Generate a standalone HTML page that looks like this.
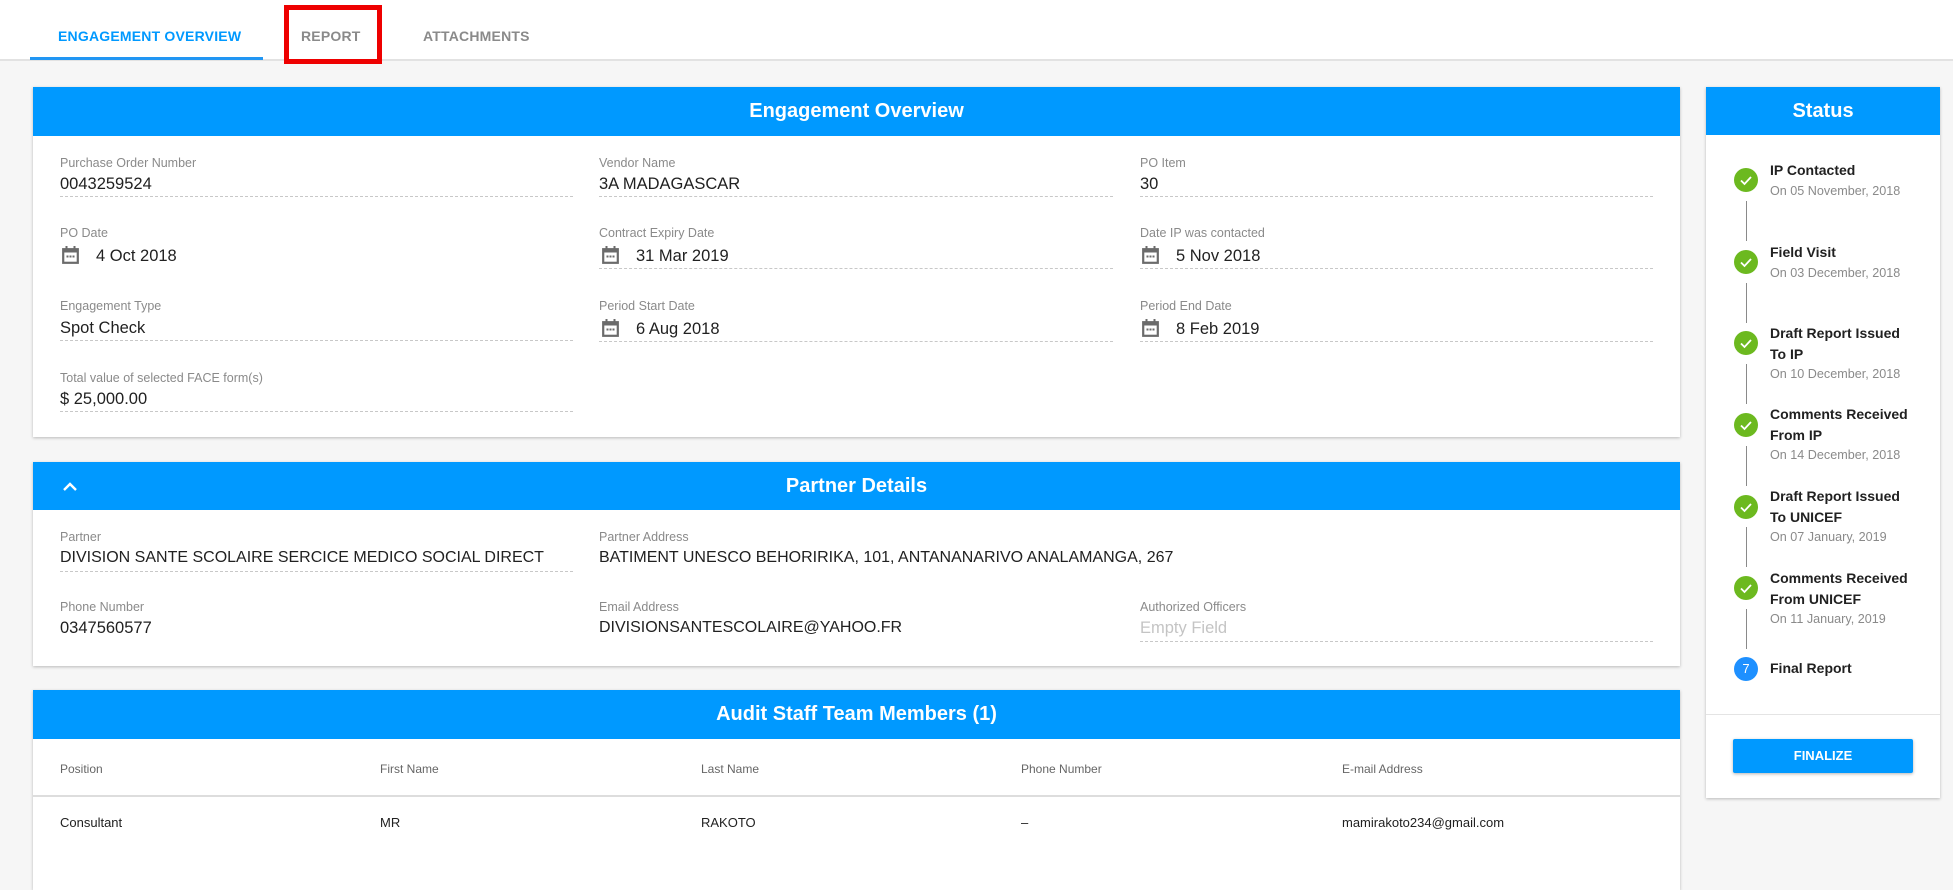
<!DOCTYPE html>
<html><head><meta charset="utf-8"><style>
*{margin:0;padding:0;box-sizing:border-box}
body{width:1953px;height:844px;overflow:hidden;background:#f6f6f6;font-family:"Liberation Sans",Arial,sans-serif;position:relative;color:#212121}
.abs{position:absolute}
.tabs{position:absolute;left:0;top:0;width:1953px;height:61px;background:#fff;border-bottom:2px solid #e2e2e2}
.tab{position:absolute;top:28px;font-size:14px;font-weight:bold;color:#8a8a8a;letter-spacing:.2px}
.card{position:absolute;background:#fff;box-shadow:0 1px 3px rgba(0,0,0,.25)}
.hdr{position:absolute;left:0;right:0;background:#0099ff;color:#fff;font-weight:bold;font-size:20px;text-align:center}
.lbl{position:absolute;font-size:12.5px;color:#8a8a8a}
.val{position:absolute;font-size:16.5px;color:#212121;white-space:nowrap}
.dash{position:absolute;height:0;border-top:1px dashed #c8c8c8}
.cal{position:absolute;width:17px;height:18px}
.st{position:absolute;left:1770px;font-size:14px;font-weight:bold;color:#212121;line-height:21px}
.sd{position:absolute;left:1770px;font-size:12.6px;color:#8a8a8a}
.ln{position:absolute;left:1746px;width:1px;background:#8a8a8a}
.th{position:absolute;top:762px;font-size:12px;color:#666}
.td{position:absolute;top:815px;font-size:13px;color:#212121}
</style></head><body>
<div class="tabs">
<div class="tab" style="left:58px;color:#0099ff">ENGAGEMENT OVERVIEW</div>
<div class="abs" style="left:30px;top:57px;width:233px;height:3px;background:#2196f3"></div>
<div class="tab" style="left:301px">REPORT</div>
<div class="tab" style="left:423px">ATTACHMENTS</div>
</div>
<div class="abs" style="left:284px;top:5px;width:98px;height:59px;border:5px solid #ee0000"></div>

<svg width="0" height="0" style="position:absolute"><defs><symbol id="c" viewBox="0 0 17 18"><rect x="1.2" y="3.2" width="14.6" height="13.6" fill="none" stroke="#6b6b6b" stroke-width="2.2"/><rect x="1" y="2.5" width="15" height="4" fill="#6b6b6b"/><rect x="3.5" y="0" width="2" height="4" fill="#6b6b6b"/><rect x="11.5" y="0" width="2" height="4" fill="#6b6b6b"/><rect x="4.5" y="9.5" width="2" height="2" fill="#6b6b6b"/><rect x="7.5" y="9.5" width="2" height="2" fill="#6b6b6b"/><rect x="10.5" y="9.5" width="2" height="2" fill="#6b6b6b"/></symbol></defs></svg>

<div class="card" style="left:33px;top:87px;width:1647px;height:350px">
<div class="hdr" style="top:0;height:49px;line-height:49px">Engagement Overview</div>
</div>
<div class="lbl" style="left:60px;top:156px">Purchase Order Number</div><div class="val" style="left:60px;top:175px">0043259524</div><div class="dash" style="left:60px;top:196px;width:513px"></div>
<div class="lbl" style="left:599px;top:156px">Vendor Name</div><div class="val" style="left:599px;top:175px">3A MADAGASCAR</div><div class="dash" style="left:599px;top:196px;width:514px"></div>
<div class="lbl" style="left:1140px;top:156px">PO Item</div><div class="val" style="left:1140px;top:175px">30</div><div class="dash" style="left:1140px;top:196px;width:513px"></div>

<div class="lbl" style="left:60px;top:226px">PO Date</div><svg class="cal" style="left:62px;top:246px"><use href="#c"/></svg><div class="val" style="left:96px;top:247px">4 Oct 2018</div>
<div class="lbl" style="left:599px;top:226px">Contract Expiry Date</div><svg class="cal" style="left:602px;top:246px"><use href="#c"/></svg><div class="val" style="left:636px;top:247px">31 Mar 2019</div><div class="dash" style="left:599px;top:268px;width:514px"></div>
<div class="lbl" style="left:1140px;top:226px">Date IP was contacted</div><svg class="cal" style="left:1142px;top:246px"><use href="#c"/></svg><div class="val" style="left:1176px;top:247px">5 Nov 2018</div><div class="dash" style="left:1140px;top:268px;width:513px"></div>

<div class="lbl" style="left:60px;top:299px">Engagement Type</div><div class="val" style="left:60px;top:319px">Spot Check</div><div class="dash" style="left:60px;top:340px;width:513px"></div>
<div class="lbl" style="left:599px;top:299px">Period Start Date</div><svg class="cal" style="left:602px;top:319px"><use href="#c"/></svg><div class="val" style="left:636px;top:320px">6 Aug 2018</div><div class="dash" style="left:599px;top:341px;width:514px"></div>
<div class="lbl" style="left:1140px;top:299px">Period End Date</div><svg class="cal" style="left:1142px;top:319px"><use href="#c"/></svg><div class="val" style="left:1176px;top:320px">8 Feb 2019</div><div class="dash" style="left:1140px;top:341px;width:513px"></div>

<div class="lbl" style="left:60px;top:371px">Total value of selected FACE form(s)</div><div class="val" style="left:60px;top:390px">$ 25,000.00</div><div class="dash" style="left:60px;top:411px;width:513px"></div>

<div class="card" style="left:33px;top:462px;width:1647px;height:204px">
<div class="hdr" style="top:0;height:48px;line-height:48px">Partner Details</div>
</div>
<svg class="abs" style="left:62px;top:480px" width="16" height="12"><path d="M2 10 L8 4 L14 10" fill="none" stroke="#fff" stroke-width="2.4"/></svg>
<div class="lbl" style="left:60px;top:530px">Partner</div><div class="val" style="left:60px;top:549px;font-size:16px">DIVISION SANTE SCOLAIRE SERCICE MEDICO SOCIAL DIRECT</div><div class="dash" style="left:60px;top:571px;width:513px"></div>
<div class="lbl" style="left:599px;top:530px">Partner Address</div><div class="val" style="left:599px;top:549px;font-size:16px">BATIMENT UNESCO BEHORIRIKA, 101, ANTANANARIVO ANALAMANGA, 267</div>
<div class="lbl" style="left:60px;top:600px">Phone Number</div><div class="val" style="left:60px;top:619px">0347560577</div>
<div class="lbl" style="left:599px;top:600px">Email Address</div><div class="val" style="left:599px;top:619px;font-size:16px">DIVISIONSANTESCOLAIRE@YAHOO.FR</div>
<div class="lbl" style="left:1140px;top:600px">Authorized Officers</div><div class="val" style="left:1140px;top:619px;color:#c4c4c4">Empty Field</div><div class="dash" style="left:1140px;top:641px;width:513px"></div>

<div class="card" style="left:33px;top:690px;width:1647px;height:200px">
<div class="hdr" style="top:0;height:49px;line-height:49px">Audit Staff Team Members (1)</div>
<div class="abs" style="left:0;right:0;top:105px;height:2px;background:#ddd"></div>
</div>
<div class="th" style="left:60px">Position</div><div class="th" style="left:380px">First Name</div><div class="th" style="left:701px">Last Name</div><div class="th" style="left:1021px">Phone Number</div><div class="th" style="left:1342px">E-mail Address</div>
<div class="td" style="left:60px">Consultant</div><div class="td" style="left:380px">MR</div><div class="td" style="left:701px">RAKOTO</div><div class="td" style="left:1021px">–</div><div class="td" style="left:1342px">mamirakoto234@gmail.com</div>

<div class="card" style="left:1706px;top:87px;width:234px;height:711px">
<div class="hdr" style="top:0;height:48px;line-height:48px">Status</div>
<div class="abs" style="left:0;right:0;top:627px;height:1px;background:#e4e4e4"></div>
<div class="abs" style="left:27px;top:652px;width:180px;height:34px;background:#0099ff;border-radius:2px;box-shadow:0 1px 3px rgba(0,0,0,.3);color:#fff;font-weight:bold;font-size:13px;text-align:center;line-height:34px">FINALIZE</div>
</div>
<svg width="0" height="0" style="position:absolute"><defs><symbol id="k" viewBox="0 0 24 24"><circle cx="12" cy="12" r="12" fill="#6cb91f"/><path d="M7 12.5 L10.5 16 L17 9" fill="none" stroke="#fff" stroke-width="1.8"/></symbol></defs></svg>
<svg class="abs" style="left:1734px;top:168px" width="24" height="24"><use href="#k"/></svg>
<div class="st" style="top:160px">IP Contacted</div><div class="sd" style="top:184px">On 05 November, 2018</div>
<div class="ln" style="top:201px;height:40px"></div>
<svg class="abs" style="left:1734px;top:250px" width="24" height="24"><use href="#k"/></svg>
<div class="st" style="top:242px">Field Visit</div><div class="sd" style="top:266px">On 03 December, 2018</div>
<div class="ln" style="top:283px;height:40px"></div>
<svg class="abs" style="left:1734px;top:331px" width="24" height="24"><use href="#k"/></svg>
<div class="st" style="top:323px">Draft Report Issued<br>To IP</div><div class="sd" style="top:367px">On 10 December, 2018</div>
<div class="ln" style="top:364px;height:40px"></div>
<svg class="abs" style="left:1734px;top:413px" width="24" height="24"><use href="#k"/></svg>
<div class="st" style="top:404px">Comments Received<br>From IP</div><div class="sd" style="top:448px">On 14 December, 2018</div>
<div class="ln" style="top:446px;height:40px"></div>
<svg class="abs" style="left:1734px;top:495px" width="24" height="24"><use href="#k"/></svg>
<div class="st" style="top:486px">Draft Report Issued<br>To UNICEF</div><div class="sd" style="top:530px">On 07 January, 2019</div>
<div class="ln" style="top:527px;height:40px"></div>
<svg class="abs" style="left:1734px;top:576px" width="24" height="24"><use href="#k"/></svg>
<div class="st" style="top:568px">Comments Received<br>From UNICEF</div><div class="sd" style="top:612px">On 11 January, 2019</div>
<div class="ln" style="top:609px;height:40px"></div>
<div class="abs" style="left:1734px;top:657px;width:24px;height:24px;border-radius:50%;background:#1e90ff;color:#fff;font-size:13px;text-align:center;line-height:24px">7</div>
<div class="st" style="top:658px">Final Report</div>
</body></html>
